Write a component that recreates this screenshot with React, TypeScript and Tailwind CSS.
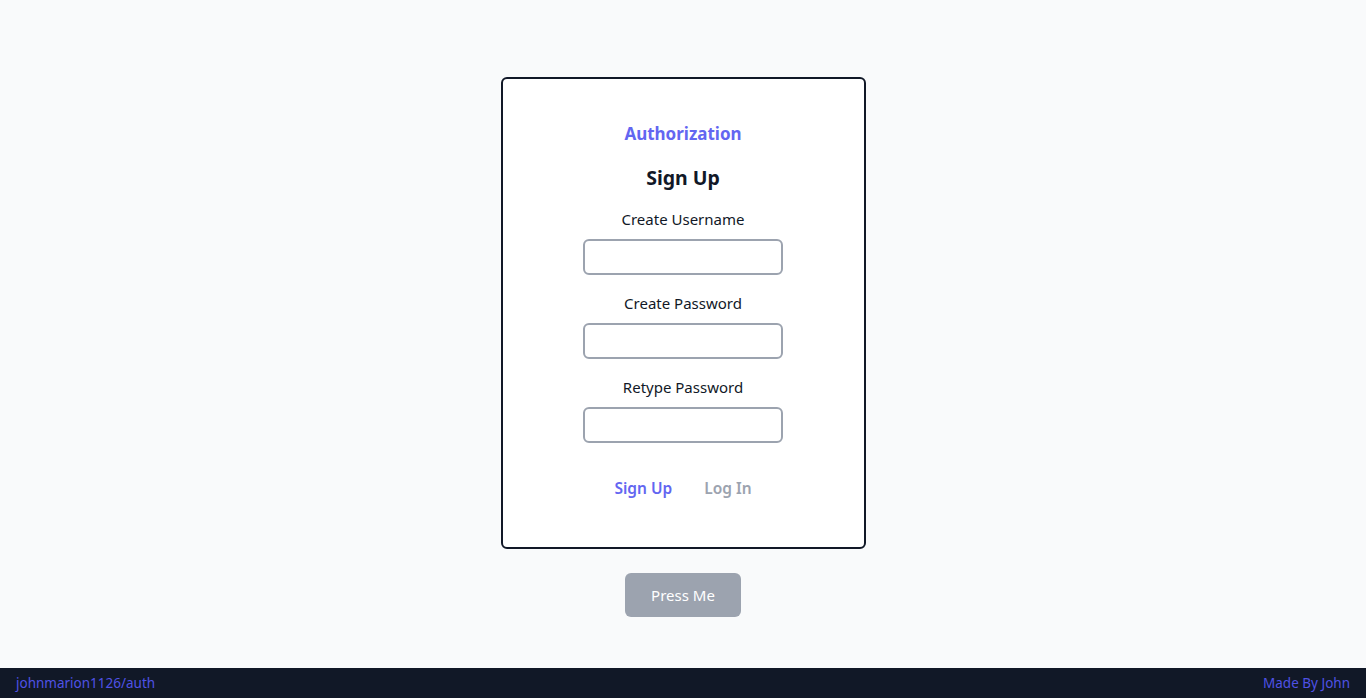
import React from 'react';

const Field = ({ label }: { label: string }) => (
  <div className="flex flex-col items-center">
    <label className="text-[15px] leading-6 text-[#111827]">{label}</label>
    <input type="text" className="mt-2 h-9 w-[200px] rounded-md border-2 border-[#9ca3af] bg-white outline-none" />
  </div>
);

export default function App() {
  return (
    <div className="flex h-screen flex-col bg-[#f9fafb] font-['Noto_Sans',sans-serif]">
      <main className="flex flex-1 flex-col items-center pt-[77px]">
        <div className="flex h-[472px] w-[365px] flex-col items-center rounded-md border-2 border-[#111827] bg-white pt-[41px]">
          <h2 className="text-[17px] font-bold leading-7 text-[#6366f1]">Authorization</h2>
          <h1 className="mt-4 text-[19.5px] font-bold leading-7 text-[#111827]">Sign Up</h1>
          <div className="mt-[15px] flex flex-col gap-4">
            <Field label="Create Username" />
            <Field label="Create Password" />
            <Field label="Retype Password" />
          </div>
          <div className="mt-[33px] flex items-center gap-8">
            <button className="text-[15.5px] font-semibold leading-6 text-[#6366f1]">Sign Up</button>
            <button className="text-[15.5px] font-semibold leading-6 text-[#9ca3af]">Log In</button>
          </div>
        </div>
        <button className="mt-6 h-11 w-[116px] rounded-md bg-[#9ca3af] text-[15px] text-white">Press Me</button>
      </main>
      <footer className="flex h-[30px] items-center justify-between bg-[#111827] px-4 text-[13.5px] text-[#4f52e5]">
        <span>johnmarion1126/auth</span>
        <span>Made By John</span>
      </footer>
    </div>
  );
}
